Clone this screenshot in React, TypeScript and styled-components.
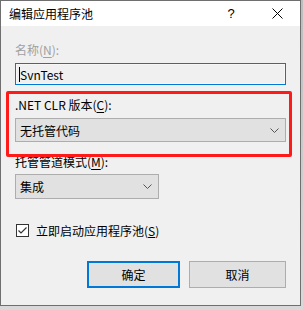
import React from 'react'
import styled, { createGlobalStyle } from 'styled-components'

const GlobalStyle = createGlobalStyle`
  html, body {
    margin: 0;
    padding: 0;
    width: 303px;
    height: 310px;
    overflow: hidden;
    background: linear-gradient(#bdbdbd, #d9d9d9);
  }
  body {
    font-family: "Noto Sans CJK SC", "Noto Sans", sans-serif;
    font-size: 12px;
    color: #000;
  }
`

const Window = styled.div`
  width: 301px;
  height: 306px;
  box-sizing: border-box;
  border: 1px solid #6f6f6f;
  background: #f0f0f0;
  display: flex;
  flex-direction: column;
`

const TitleBar = styled.div`
  height: 25px;
  background: #ffffff;
  display: flex;
  align-items: center;
  padding-left: 8px;
`

const Title = styled.div`
  flex: 1;
  font-size: 12px;
  line-height: 16px;
`

const TitleButton = styled.div<{ $w: number }>`
  width: ${p => p.$w}px;
  height: 25px;
  display: flex;
  align-items: center;
  justify-content: center;
  font-family: "Liberation Sans", sans-serif;
  font-size: 13px;
`

const Body = styled.div`
  padding: 16px 14px 0 14px;
  display: flex;
  flex-direction: column;
`

const Label = styled.div<{ $disabled?: boolean; $top?: number }>`
  font-size: 12px;
  line-height: 16px;
  color: ${p => (p.$disabled ? '#a0a0a0' : '#000')};
  margin-top: ${p => p.$top ?? 0}px;
  margin-bottom: 5px;
  u { text-decoration: underline; text-underline-offset: 2px; }
`

const TextBox = styled.div`
  height: 22px;
  box-sizing: border-box;
  border: 1px solid #0078d7;
  background: #f0f0f0;
  box-shadow: inset 0 0 0 1px #f7f7f7;
  display: flex;
  align-items: center;
  padding-left: 3px;
  font-size: 12px;
`

const Caret = styled.span`
  display: inline-block;
  width: 1px;
  height: 15px;
  background: #000;
  margin-right: 0;
`

const Group = styled.div`
  position: relative;
  margin-top: 12px;
  display: flex;
  flex-direction: column;
  &::after {
    content: '';
    position: absolute;
    left: -9px;
    right: -6px;
    top: -6px;
    bottom: -15px;
    border: 3px solid #ff1a1a;
    border-radius: 2px;
    pointer-events: none;
  }
`

const Select = styled.div<{ $w?: number; $h: number }>`
  width: ${p => (p.$w ? `${p.$w}px` : 'auto')};
  height: ${p => p.$h}px;
  box-sizing: border-box;
  border: 1px solid #adadad;
  background: #e1e1e1;
  display: flex;
  align-items: center;
  justify-content: space-between;
  padding: 0 6px 0 4px;
  font-size: 12px;
`

const CheckRow = styled.div`
  margin-top: 23px;
  height: 16px;
  display: flex;
  align-items: center;
  gap: 7px;
  padding-left: 1px;
`

const CheckBox = styled.div`
  width: 13px;
  height: 13px;
  box-sizing: border-box;
  border: 1px solid #333;
  background: #fff;
  display: flex;
  align-items: center;
  justify-content: center;
`

const Buttons = styled.div`
  margin-top: 23px;
  display: flex;
  justify-content: flex-end;
  gap: 9px;
`

const Button = styled.div<{ $primary?: boolean; $w: number }>`
  width: ${p => p.$w}px;
  height: 27px;
  box-sizing: border-box;
  border: ${p => (p.$primary ? '2px solid #0078d7' : '1px solid #adadad')};
  background: #e1e1e1;
  display: flex;
  align-items: center;
  justify-content: center;
  font-size: 12px;
`

const Chevron = () => (
  <svg width="9" height="5" viewBox="0 0 9 5">
    <polyline points="0.5,0.5 4.5,4.5 8.5,0.5" fill="none" stroke="#555" strokeWidth="1" />
  </svg>
)

export default function App() {
  return (
    <>
      <GlobalStyle />
      <Window>
        <TitleBar>
          <Title>编辑应用程序池</Title>
          <TitleButton $w={46}>?</TitleButton>
          <TitleButton $w={46}>
            <svg width="11" height="11" viewBox="0 0 11 11">
              <path d="M0.5 0.5 L10.5 10.5 M10.5 0.5 L0.5 10.5" stroke="#000" strokeWidth="1" />
            </svg>
          </TitleButton>
        </TitleBar>
        <Body>
          <Label $disabled>名称(<u>N</u>):</Label>
          <TextBox>
            <Caret />
            SvnTest
          </TextBox>
          <Group>
            <Label>.NET CLR 版本(<u>C</u>):</Label>
            <Select $h={24}>
              <span>无托管代码</span>
              <Chevron />
            </Select>
          </Group>
          <Label $top={12} style={{ marginBottom: 4 }}>托管管道模式(<u>M</u>):</Label>
          <Select $w={144} $h={25}>
            <span>集成</span>
            <Chevron />
          </Select>
          <CheckRow>
            <CheckBox>
              <svg width="11" height="11" viewBox="0 0 11 11">
                <polyline points="1.5,5.5 4,8 9.5,2.5" fill="none" stroke="#333" strokeWidth="1.2" />
              </svg>
            </CheckBox>
            <span>立即启动应用程序池(<u>S</u>)</span>
          </CheckRow>
          <Buttons>
            <Button $primary $w={93}>确定</Button>
            <Button $w={97}>取消</Button>
          </Buttons>
        </Body>
      </Window>
    </>
  )
}
